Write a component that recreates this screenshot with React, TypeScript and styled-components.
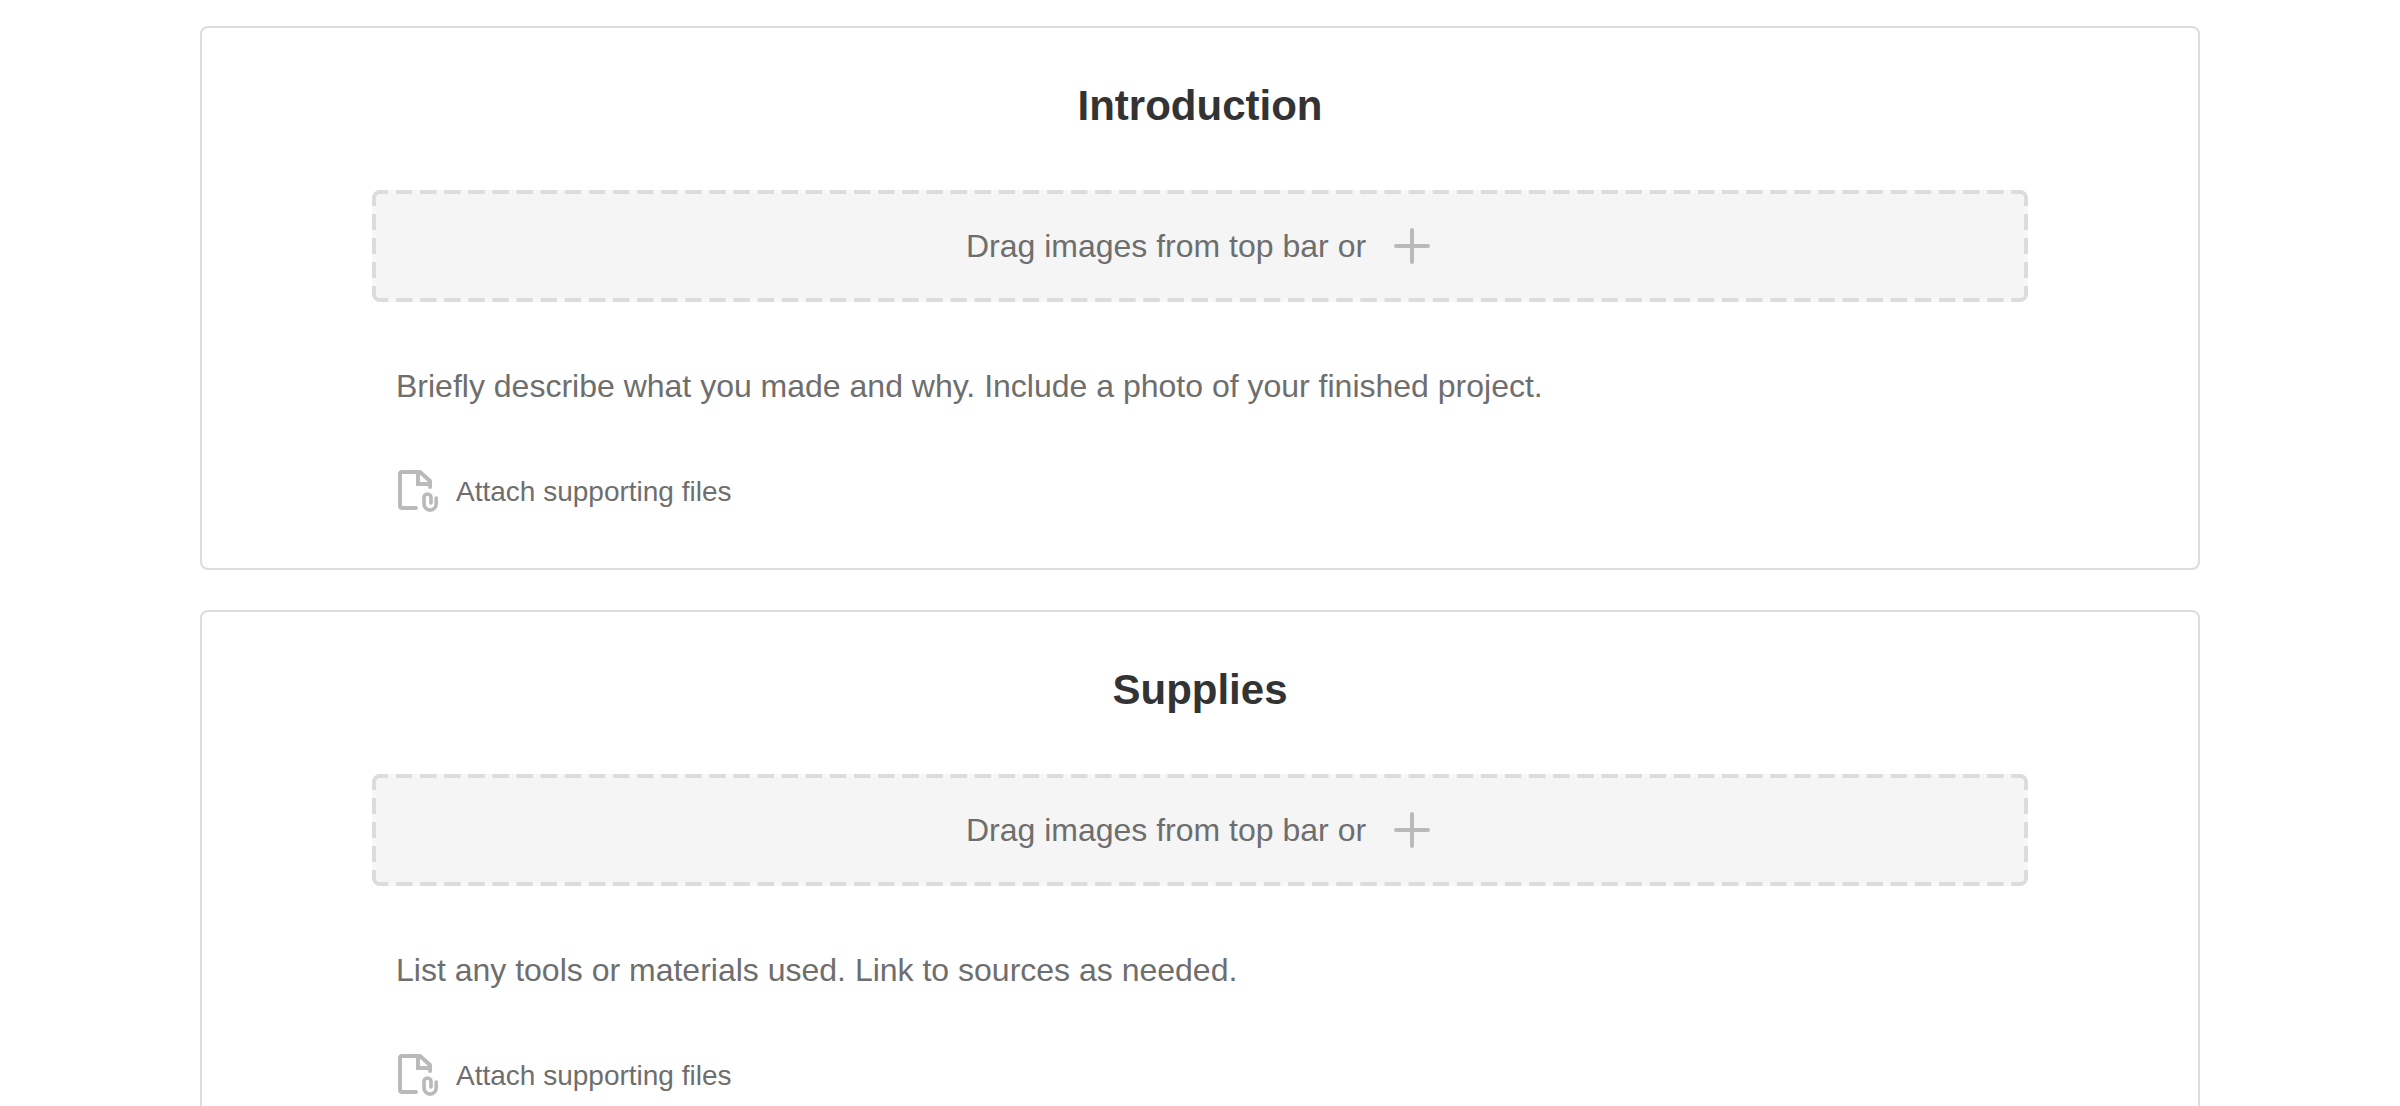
import React from "react";
import styled, { createGlobalStyle } from "styled-components";

const GlobalStyle = createGlobalStyle`
  *, *::before, *::after { box-sizing: border-box; }
  body {
    margin: 0;
    background: #fff;
    color: #6e6e6e;
    font-family: "Helvetica Neue", "Liberation Sans", Arial, sans-serif;
    font-size: 32px;
    line-height: 40px;
  }
`;

const Page = styled.main`
  display: flex;
  flex-direction: column;
  gap: 40px;
  max-width: 2080px;
  margin: 0 auto;
  padding: 26px 40px;
`;

const Card = styled.section`
  display: flex;
  flex-direction: column;
  padding: 54px 170px 52px;
  background: #fff;
  border: 2px solid #dcdcdc;
  border-radius: 8px;
`;

const Title = styled.h2`
  margin: 0 0 60px;
  color: #333;
  font-size: 42px;
  font-weight: 700;
  line-height: 48px;
  text-align: center;
`;

const DropZone = styled.div`
  position: relative;
  display: flex;
  align-items: center;
  justify-content: center;
  gap: 24px;
  min-height: 112px;
  background: #f5f5f5;
  border: 4px solid #dcdcdc;
  border-radius: 8px;

  /* Breaks in the border, spread evenly so every corner stays solid. */
  &::before,
  &::after {
    content: "";
    position: absolute;
    pointer-events: none;
  }
  &::before {
    inset: -4px -8px;
    clip-path: inset(0 4px);
    background:
      linear-gradient(90deg, #f7f7f7 4px, transparent 4px 20px, #f7f7f7 20px) top left / 24px 4px round no-repeat,
      linear-gradient(90deg, #f7f7f7 4px, transparent 4px 20px, #f7f7f7 20px) bottom left / 24px 4px round no-repeat;
  }
  &::after {
    inset: -8px -4px;
    clip-path: inset(4px 0);
    background:
      linear-gradient(#f7f7f7 4px, transparent 4px 20px, #f7f7f7 20px) top left / 4px 24px no-repeat round,
      linear-gradient(#f7f7f7 4px, transparent 4px 20px, #f7f7f7 20px) top right / 4px 24px no-repeat round;
  }
`;

const IconButton = styled.button`
  display: flex;
  padding: 4px;
  border: 0;
  background: none;
  color: #bababa;
  cursor: pointer;
`;

const Body = styled.textarea`
  display: block;
  width: 100%;
  height: 40px;
  margin: 64px 0 62px;
  padding: 0 24px;
  border: 0;
  outline: 0;
  resize: none;
  overflow: hidden;
  background: transparent;
  color: #333;
  font: inherit;

  &::placeholder {
    color: #6e6e6e;
    opacity: 1;
  }
`;

const AttachButton = styled.button`
  display: flex;
  align-items: center;
  align-self: flex-start;
  gap: 16px;
  margin-left: 24px;
  padding: 0;
  border: 0;
  background: none;
  color: #6e6e6e;
  font-family: inherit;
  font-size: 28px;
  line-height: 48px;
  cursor: pointer;
`;

const PlusIcon = () => (
  <svg width="36" height="36" viewBox="0 0 36 36" fill="none" stroke="currentColor" strokeWidth="4" strokeLinecap="round" aria-hidden="true">
    <path d="M18 2v32M2 18h32" />
  </svg>
);

const FileClipIcon = () => (
  <svg width="44" height="48" viewBox="0 2 44 48" fill="none" stroke="#bababa" strokeWidth="4" strokeLinecap="round" strokeLinejoin="round" aria-hidden="true">
    <path d="M20 42H6a2 2 0 0 1-2-2V8a2 2 0 0 1 2-2h18l10 9v6" />
    <path d="M22 6v12h12" strokeLinejoin="miter" />
    <path d="M40.2 32v6a6.1 6.1 0 0 1-12.2 0v-6.5a3.5 3.5 0 0 1 7 0V37" strokeWidth="3.6" />
  </svg>
);

interface StepProps {
  title: string;
  placeholder: string;
}

const Step = ({ title, placeholder }: StepProps) => (
  <Card>
    <Title>{title}</Title>
    <DropZone>
      <span>Drag images from top bar or</span>
      <IconButton type="button" aria-label={`Add images to ${title}`}>
        <PlusIcon />
      </IconButton>
    </DropZone>
    <Body rows={1} placeholder={placeholder} aria-label={`${title} text`} />
    <AttachButton type="button">
      <FileClipIcon />
      Attach supporting files
    </AttachButton>
  </Card>
);

export default function App() {
  return (
    <>
      <GlobalStyle />
      <Page>
        <Step
          title="Introduction"
          placeholder="Briefly describe what you made and why. Include a photo of your finished project."
        />
        <Step title="Supplies" placeholder="List any tools or materials used. Link to sources as needed." />
      </Page>
    </>
  );
}
